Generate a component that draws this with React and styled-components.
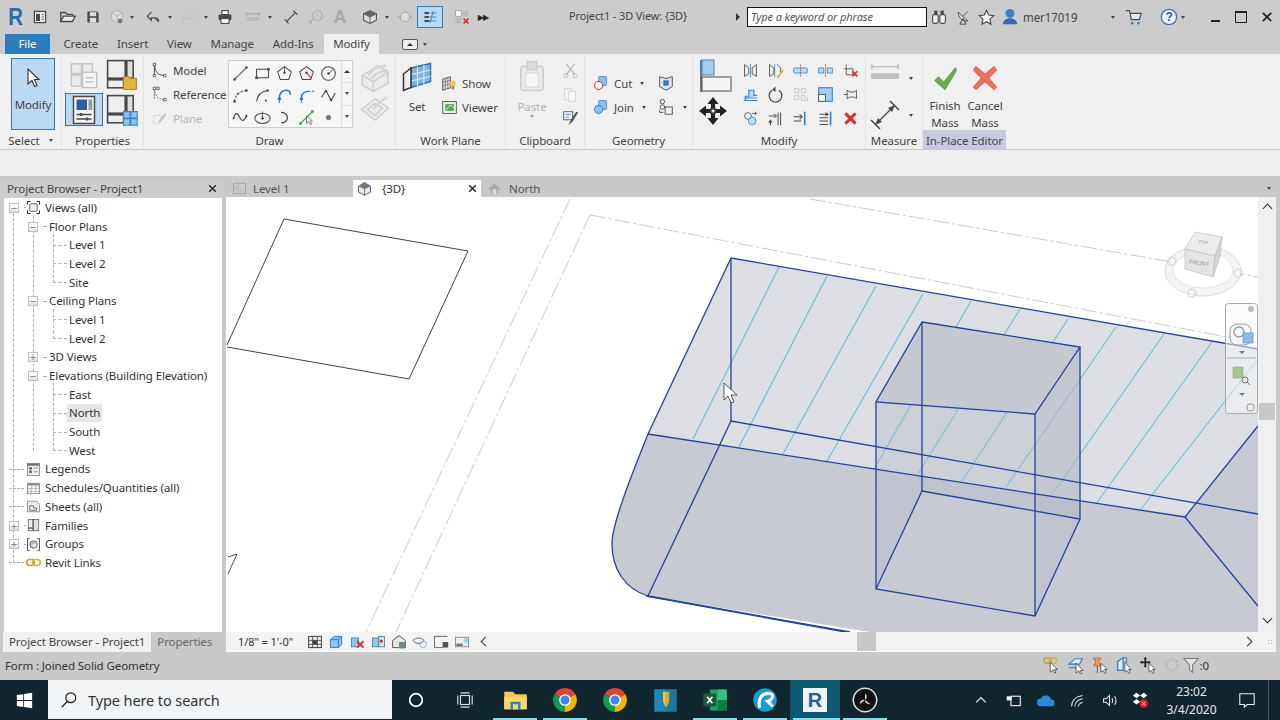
import React from 'react';
import styled, { createGlobalStyle } from 'styled-components';

const GlobalStyle = createGlobalStyle`
  html, body { margin: 0; padding: 0; background: #c9c9c9; }
  body { font-family: "Noto Sans", "Open Sans", sans-serif; font-size: 11.5px; letter-spacing: -0.1px; color: #333; }
`;

const B = '#3a86c8';
const D = '#4a4a4a';
const L = '#c4c4c4';
const Y = '#e3b341';
const R = '#d8312a';
const N = 'none';

// every icon is drawn on a 20x20 grid
const icons = {
  props: <><rect x="3" y="3" width="14" height="14" fill="#eee" stroke={D} strokeWidth="1.6" /><rect x="5" y="6" width="5" height="9" fill={D} /><path d="M12 7h3M12 10h3M12 13h3" stroke={D} /></>,
  open: <><path d="M2 15V5h5l2 2h6v2" fill={N} stroke={D} strokeWidth="1.5" /><path d="M2 15l3-6h13l-3 6z" fill="#eee" stroke={D} strokeWidth="1.5" /></>,
  save: <><path d="M3 3h12l2 2v12H3z" fill={D} /><rect x="6" y="4" width="8" height="5" fill="#ddd" /><rect x="6" y="11" width="8" height="6" fill="#ddd" /></>,
  sync: <><path d="M10 2l7 3v8l-7 5-7-5V5z" fill="#ddd" stroke="#aaa" /><path d="M3 5l7 3 7-3M10 8v10" stroke="#aaa" fill={N} /><circle cx="14" cy="15" r="3" fill="#777" /></>,
  undo: <path d="M8 4L3 9l5 5V11h5c3 0 4 2 4 5-1-2-2-3-4-3" fill={N} stroke={D} strokeWidth="1.5" />,
  redo: <path d="M12 4l5 5-5 5V11H7c-3 0-4 2-4 5 1-2 2-3 4-3" fill={N} stroke={L} strokeWidth="1.5" />,
  print: <><rect x="6" y="2" width="8" height="5" fill="#fff" stroke={D} strokeWidth="1.4" /><rect x="2" y="7" width="16" height="7" rx="1.5" fill={D} /><rect x="5" y="12" width="10" height="6" fill="#fff" stroke={D} strokeWidth="1.4" /></>,
  measure: <><path d="M2 6h16M2 4v4M18 4v4" stroke="#999" fill={N} /><rect x="2" y="10" width="16" height="5" fill="#bbb" /></>,
  dim: <><path d="M4 16L16 4" stroke={D} strokeWidth="1.5" /><path d="M2 13l5 5M13 2l5 5" stroke={D} strokeWidth="1.5" /></>,
  tag: <><circle cx="12" cy="8" r="6" fill={N} stroke="#aaa" strokeWidth="1.3" /><path d="M7 12l-4 4" stroke="#aaa" strokeWidth="1.3" /><circle cx="3" cy="17" r="1.5" fill="#aaa" /><path d="M12 5v6" stroke="#aaa" /></>,
  house: <><path d="M10 2l8 4v8l-8 4-8-4V6z" fill="#ddd" stroke={D} strokeWidth="1.3" /><path d="M2 6l8 4 8-4M10 10v8" fill={N} stroke={D} /><path d="M2 6l8-4 8 4-8 4z" fill="#666" /></>,
  diamond: <><circle cx="10" cy="10" r="6" fill="#ddd" stroke="#999" /><path d="M1 10h3M16 10h3" stroke="#999" /></>,
  thin: <><path d="M3 5h6M3 10h6M3 15h6" stroke="#222" strokeWidth="2" /><path d="M11 5h7M10 10h8M9 15h9M14 3l-4 14" stroke={B} strokeWidth="1.3" /></>,
  hidden: <><rect x="2" y="2" width="7" height="7" fill="#fff" stroke="#999" /><rect x="11" y="2" width="7" height="7" fill="#bbb" /><rect x="2" y="11" width="7" height="7" fill="#bbb" /><path d="M12 12l6 6M18 12l-6 6" stroke={R} strokeWidth="2" /></>,
  cursor: <path d="M5 1v15l4-3.5 2.5 6 2.5-1-2.5-6H16z" fill="#fff" stroke="#333" strokeWidth="1.1" />,
  typeProps: <><rect x="1" y="2" width="7" height="7" fill="#ececec" stroke={L} /><rect x="9" y="2" width="7" height="7" fill="#ececec" stroke={L} /><rect x="1" y="10" width="7" height="8" fill="#ececec" stroke={L} /><rect x="9" y="8" width="10" height="11" fill="#f5f5f5" stroke={L} /><path d="M11 12h6M11 15h6" stroke={L} /></>,
  folder: <><rect x="1" y="1" width="11" height="11" fill="#eee" stroke={D} /><rect x="13" y="1" width="4" height="11" fill="#ddd" stroke={D} /><rect x="1" y="13" width="10" height="5" fill="#eee" stroke={D} /><path d="M11 11h3l1 1h4v7h-8z" fill={Y} stroke="#a97f20" strokeWidth=".6" /></>,
  propsBig: <><rect x="3" y="1" width="14" height="18" fill="#f6f6f6" stroke={D} /><rect x="5" y="3" width="7" height="7" fill="#2f5f9f" /><rect x="13" y="3" width="2.5" height="7" fill="#999" /><path d="M5 13h10M5 16h10" stroke={D} /><path d="M8 12v2M12 15v2" stroke={D} strokeWidth="1.5" /></>,
  gridBlue: <><rect x="1" y="1" width="11" height="11" fill="#eee" stroke={D} /><rect x="13" y="1" width="4" height="11" fill="#ddd" stroke={D} /><rect x="1" y="13" width="10" height="5" fill="#eee" stroke={D} /><path d="M11 11h4v4h-4zM15.5 11h4v4h-4zM11 15.5h4v4h-4zM15.5 15.5h4v4h-4z" fill="#8fc4ee" stroke={B} strokeWidth=".7" /></>,
  model: <><path d="M3 2v15M3 3c1 10 4 13 12 14" fill={N} stroke={D} strokeWidth="1.2" /><path d="M1.5 1.5h3v3h-3zM1.5 15.5h3v3h-3zM14.5 15.5h3v3h-3z" fill="#fff" stroke={D} /></>,
  refPlane: <><path d="M3 3v14M3 4c1 9 4 12 12 13" fill={N} stroke={D} strokeDasharray="2 1.5" /><path d="M1.5 1.5h3v3h-3zM6 1.5h3v3H6zM14.5 15.5h3v3h-3z" fill="#fff" stroke={D} /></>,
  plane: <><path d="M2 7h10l-3 10H2z" fill={N} stroke={L} strokeDasharray="2 1" /><path d="M8 14l8-10 2 2-8 10z" fill={L} /></>,
  line: <><path d="M3 17L17 3" stroke={D} strokeWidth="1.2" /><circle cx="3" cy="17" r="1.5" fill={D} /><circle cx="17" cy="3" r="1.5" fill={D} /></>,
  rect: <><rect x="3" y="5" width="14" height="10" fill={N} stroke={D} strokeWidth="1.2" /><rect x="15.5" y="3.5" width="3" height="3" fill={D} /><rect x="1.5" y="13.5" width="3" height="3" fill={D} /></>,
  pent: <><path d="M10 2l8 6-3 9H5L2 8z" fill={N} stroke={D} strokeWidth="1.2" /><circle cx="10" cy="9" r="1.5" fill={D} /><path d="M10 2v7" stroke={D} /></>,
  pentR: <><path d="M10 2l8 6-3 9H5L2 8z" fill={N} stroke={D} strokeWidth="1.2" /><circle cx="10" cy="9" r="1.5" fill={D} /><path d="M10 9l6 7" stroke={R} strokeWidth="1.2" /></>,
  circ: <><circle cx="10" cy="10" r="8" fill={N} stroke={D} strokeWidth="1.2" /><circle cx="10" cy="10" r="1.5" fill={D} /><path d="M10 10l6-5" stroke={D} /></>,
  arc3: <><path d="M3 17C4 9 9 5 17 4" fill={N} stroke={D} strokeWidth="1.2" strokeDasharray="3 1.5" /><circle cx="3" cy="17" r="1.5" fill={D} /><circle cx="17" cy="4" r="1.5" fill={D} /><circle cx="7" cy="8" r="1.2" fill={D} /></>,
  arc2: <><path d="M3 17C4 9 9 5 16 4" fill={N} stroke={D} strokeWidth="1.2" /><circle cx="16" cy="4" r="1.5" fill={D} /><circle cx="14" cy="16" r="1.2" fill={D} /></>,
  arcB: <><path d="M4 13C4 6 9 3 14 4c2 1 3 3 3 5" fill={N} stroke="#2c79c2" strokeWidth="1.8" /><circle cx="4" cy="14" r="2" fill="#2c79c2" /><path d="M4 16v3" stroke={D} /></>,
  arcB2: <><path d="M4 13C4 7 8 5 14 5" fill={N} stroke="#2c79c2" strokeWidth="1.8" /><circle cx="4" cy="14" r="2" fill="#2c79c2" /><path d="M4 16v3M16 5h3" stroke={D} /></>,
  spline: <><path d="M2 12L7 4l6 12 5-9" fill={N} stroke={D} strokeWidth="1.2" /><circle cx="7" cy="5" r="1.5" fill={D} /><circle cx="13" cy="15" r="1.5" fill={D} /></>,
  wave: <><path d="M2 10c3-8 5-4 7 0s5 6 8-2" fill={N} stroke={D} strokeWidth="1.5" /><circle cx="2" cy="11" r="1.3" fill={D} /><circle cx="17" cy="8" r="1.3" fill={D} /></>,
  ellipse: <><ellipse cx="10" cy="11" rx="9" ry="6" fill={N} stroke={D} strokeWidth="1.2" /><circle cx="10" cy="11" r="1.5" fill={D} /><path d="M10 3v8" stroke={D} /></>,
  partial: <path d="M6 4c8 0 10 9 3 12H6" fill={N} stroke={D} strokeWidth="1.5" />,
  pick: <><path d="M3 17L17 3" stroke="#4ca64c" strokeWidth="1.5" /><circle cx="3" cy="17" r="1.7" fill="#4ca64c" /><circle cx="17" cy="3" r="1.7" fill="#4ca64c" /><path d="M10 8v9l2.5-2 2 3.5 1.5-1-2-3.5h3z" fill="#fff" stroke="#333" strokeWidth=".7" /></>,
  dot: <circle cx="10" cy="10" r="3" fill="#777" />,
  faded1: <><path d="M2 9l10-6 6 4v7l-9 5-7-4z" fill="#ebebeb" stroke="#cfcfcf" /><path d="M2 9l7 4 9-6M9 13v6" fill={N} stroke="#cfcfcf" /><path d="M6 9c2-4 6-6 11-6M8 11c2-3 6-5 10-5" stroke="#d5d5d5" strokeWidth="1.5" fill={N} /></>,
  faded2: <><path d="M1 11l9-7 9 6-9 8z" fill="#ececec" stroke="#cfcfcf" /><path d="M5 11l5-4 5 3-5 5z" fill={N} stroke="#cfcfcf" /><path d="M9 11c2-4 5-6 9-8" stroke="#d5d5d5" strokeWidth="1.5" fill={N} /></>,
  setGrid: <><path d="M6 4l13-3v12L6 17z" fill="#7fb4e0" stroke="#2f6ea9" /><path d="M10.3 3v13M14.6 2v13M6 8.3l13-3M6 12.6l13-3" stroke="#dcecf9" strokeWidth=".7" /><path d="M1 8l5-4v13l-5 2z" fill="#f0f0f0" stroke="#333" /></>,
  show: <><path d="M2 5l9-3v13l-9 3z" fill="#ddd" stroke={D} /><path d="M5 4v13M8 3v13M2 9l9-3M2 13l9-3" stroke={D} strokeWidth=".6" /><circle cx="14" cy="10" r="3.5" fill="#f2c94c" /><rect x="12.5" y="13" width="3" height="4" fill="#888" /></>,
  viewer: <><rect x="2" y="3" width="16" height="14" fill="#eee" stroke={D} /><rect x="5" y="6" width="10" height="8" fill="#57a55a" /><path d="M6 13l5-6 3 3" stroke="#fff" fill={N} /></>,
  paste: <><rect x="3" y="4" width="14" height="15" rx="2" fill="#ebebeb" stroke="#cfcfcf" /><rect x="7" y="1" width="6" height="5" fill="#dcdcdc" stroke="#cfcfcf" /><rect x="6" y="8" width="8" height="9" fill="#f7f7f7" stroke="#ddd" /></>,
  scissors: <><path d="M5 2l10 13M15 2L5 15" stroke="#bbb" strokeWidth="1.5" /><circle cx="4.5" cy="16" r="2.5" fill={N} stroke="#bbb" /><circle cx="15.5" cy="16" r="2.5" fill={N} stroke="#bbb" /></>,
  copy: <><path d="M3 3h8v13H3z" fill="#f4f4f4" stroke="#ccc" /><path d="M8 6h8v12H8z" fill="#f7f7f7" stroke="#ccc" /></>,
  brush: <><rect x="3" y="3" width="10" height="9" fill="#f4f4f4" stroke="#555" /><path d="M5 6h6M5 9h4" stroke={B} /><path d="M8 18l3-6 6-9 2 1-6 10z" fill="#555" /></>,
  cut: <><rect x="7" y="2" width="10" height="11" rx="1" fill="#8fc0ea" stroke={B} /><circle cx="7" cy="13" r="5" fill="#fff" stroke={R} strokeWidth="1.3" /></>,
  join: <><rect x="7" y="2" width="10" height="11" rx="1" fill="#8fc0ea" stroke={B} /><circle cx="7" cy="13" r="5" fill="#8fc0ea" stroke={B} strokeWidth="1.3" /></>,
  cutWall: <><path d="M3 3l7 2 7-2v11l-7 4-7-4z" fill="#e4e4e4" stroke={D} /><rect x="7" y="7" width="6" height="6" fill="#2f7ec4" /></>,
  wallJoin: <><circle cx="6" cy="4" r="2.5" fill={N} stroke={D} /><circle cx="6" cy="10" r="2.5" fill={N} stroke={D} /><rect x="9" y="10" width="8" height="8" fill={N} stroke={D} /><path d="M3 13v3h4" fill={N} stroke={D} /></>,
  alignBig: <><path d="M2 1v32" stroke={D} strokeWidth="1.5" /><rect x="3" y="1" width="12" height="15" fill="#a4cdec" stroke={B} /><rect x="3" y="18" width="29" height="14" fill="#f4f4f4" stroke={D} /></>,
  move: <><path d="M10 0l4 5h-2.5v3h-3V5H6zM10 20l4-5h-2.5v-3h-3v3H6zM0 10l5-4v2.5h3v3H5V14zM20 10l-5-4v2.5h-3v3h3V14z" fill="#222" /><rect x="8.5" y="8.5" width="3" height="3" fill="#fff" stroke="#222" /></>,
  mirror: <><path d="M3 3l5 4v7l-5 3zM17 3l-5 4v7l5 3z" fill="#eee" stroke={D} /><path d="M10 2v16" stroke={B} /></>,
  mirrorPen: <><path d="M3 3l5 4v7l-5 3zM12 3l4 4v7" fill="#eee" stroke={D} /><path d="M9 2v16" stroke={B} /><path d="M11 18l7-9 2 1-7 9z" fill={Y} /></>,
  splitB: <><rect x="2" y="7" width="16" height="6" rx="1" fill="#bcdcf4" stroke={B} /><path d="M10 3v14" stroke={R} strokeDasharray="2 1" /></>,
  splitC: <><rect x="2" y="7" width="6" height="6" fill="#bcdcf4" stroke={B} /><rect x="12" y="7" width="6" height="6" fill="#bcdcf4" stroke={B} /><path d="M10 3v14" stroke={R} strokeDasharray="2 1" /></>,
  unpinX: <><path d="M5 3v5H2M5 8h8v7H5z" fill={N} stroke={D} /><path d="M12 11l6 6M18 11l-6 6" stroke={R} strokeWidth="2" /></>,
  offset: <><path d="M2 17h16M4 17v-5h4V5h6v6h4" fill="#bcdcf4" stroke={B} strokeWidth="1.3" /><path d="M2 14h16" stroke={B} /></>,
  rotate: <><path d="M14 5a7.5 7.5 0 1 1-8 0" fill={N} stroke={D} strokeWidth="1.5" /><path d="M10 1v6l-4-3z" fill={D} /></>,
  arrayG: <path d="M3 3h5v5H3zM11 3h5v5h-5zM3 11h5v5H3zM11 11h4v3h3v3h-7z" fill={N} stroke="#c4c4c4" />,
  scale: <><rect x="2" y="2" width="16" height="16" fill="#a4cdec" stroke={B} strokeWidth="1.3" /><rect x="2" y="10" width="8" height="8" fill="#fff" stroke={D} /></>,
  pin: <path d="M2 10h4M6 5l3 2h6l2-2v10l-2-2H9l-3 2z" fill={N} stroke={D} />,
  copyM: <><circle cx="7" cy="7" r="4" fill={N} stroke={D} /><circle cx="12" cy="13" r="4.5" fill="#bcdcf4" stroke={B} /><path d="M12 4h5l-2-2M17 4l-2 2" fill={N} stroke={D} /></>,
  trim: <path d="M2 7h6M8 5l3 2-3 2M4 12v6M2 15l2-3 2 3M13 3v15M13 18v-4M16 3v15" fill={N} stroke={D} strokeWidth="1.2" />,
  trimOne: <><path d="M2 8h10M9 5l3 3-3 3M2 13h9" fill={N} stroke={D} strokeWidth="1.2" /><path d="M15 2v16" stroke={B} strokeWidth="2" /></>,
  trimMany: <><path d="M3 5h10M3 9h10M3 13h10M3 17h10M10 3l3 2-3 2" fill={N} stroke={D} strokeWidth="1.2" /><path d="M16 2v16" stroke={B} strokeWidth="2" /></>,
  del: <path d="M4 4l12 12M16 4L4 16" stroke={R} strokeWidth="3.5" />,
  measureBig: <><path d="M2 4h28M2 1v6M30 1v6" stroke="#aaa" fill={N} /><rect x="1" y="11" width="30" height="6" rx="1" fill="#c0c0c0" /></>,
  dimBig: <><path d="M5 25L25 5" stroke={D} strokeWidth="1.2" /><path d="M1 20l9 9M20 1l9 9" stroke={D} strokeWidth="1.5" /><path d="M5 25l3-7 4 4zM25 5l-3 7-4-4z" fill={D} /></>,
  check: <path d="M2 12l3-3 4 4 9-11 1 2-9 15z" fill="#6bab4d" stroke="#4e8a35" strokeWidth=".5" />,
  cancel: <path d="M3 1l7 6 7-6 2 3-6 6 6 7-2 2-7-6-7 6-2-2 6-7-6-6z" fill="#ef6e5e" stroke="#cf4a3a" strokeWidth=".5" />,
  binoc: <><rect x="2" y="7" width="7" height="11" rx="2" fill="#eee" stroke={D} strokeWidth="1.4" /><rect x="11" y="7" width="7" height="11" rx="2" fill="#eee" stroke={D} strokeWidth="1.4" /><rect x="4" y="2" width="4" height="5" fill={D} /><rect x="12" y="2" width="4" height="5" fill={D} /></>,
  sat: <><path d="M4 4c0 7 5 11 12 11z" fill="#ddd" stroke={D} strokeWidth="1.2" /><path d="M10 12l-4 7h8zM10 9l6-6" stroke={D} fill={N} strokeWidth="1.2" /></>,
  star: <path d="M10 1.5l2.6 5.6 6 .7-4.5 4.1 1.2 6L10 15l-5.3 2.9 1.2-6L1.4 7.8l6-.7z" fill="#f4f4f4" stroke={D} strokeWidth="1.3" />,
  user: <><circle cx="10" cy="6" r="5" fill="#4a7cc4" /><path d="M10 11C5 12 2 14 2 18h16c0-4-3-6-8-7z" fill="#3d69b0" /></>,
  cart: <><path d="M1 3h4l2 10h9l2-7H6" fill="#dceaf7" stroke={D} strokeWidth="1.3" /><circle cx="8" cy="17" r="1.5" fill={B} /><circle cx="15" cy="17" r="1.5" fill={B} /></>,
  help: <circle cx="10" cy="10" r="8.5" fill="#eef2fb" stroke="#4a6fb5" strokeWidth="1.5" />,
  sheetTab: <><path d="M2 3h16v14H2z" fill={N} stroke="#999" /><path d="M8 3v6H2M8 13h6" fill={N} stroke="#999" strokeDasharray="2 1" /></>,
  house3d: <><path d="M10 2l8 5v8l-8 4-8-4V7z" fill="#e6e6e6" stroke="#555" strokeWidth="1.2" /><path d="M2 7l8-5 8 5-8 4z" fill="#777" /><path d="M10 11v8" stroke="#555" /></>,
  north: <><path d="M10 3l9 8h-4v6H5v-6H1z" fill="#aaa" /><rect x="7.5" y="11" width="5" height="6" fill="#ddd" /></>,
  viewsAll: <><path d="M2 6V2h4M14 2h4v4M18 14v4h-4M6 18H2v-4" fill={N} stroke="#222" strokeWidth="1.3" /><rect x="5" y="5" width="10" height="10" rx="1.5" fill="#eee" stroke="#666" strokeWidth="1.3" /></>,
  legends: <><rect x="2" y="2" width="16" height="16" fill="#eee" stroke="#777" /><rect x="2" y="2" width="16" height="3" fill="#777" /><rect x="4" y="7" width="4" height="3" fill="#666" /><path d="M10 8h6M10 13h6" stroke="#777" /><circle cx="6" cy="13" r="2" fill="#666" /></>,
  schedules: <><rect x="2" y="3" width="16" height="14" fill="#f4f4f4" stroke="#777" /><rect x="2" y="3" width="16" height="3" fill="#888" /><path d="M2 10h16M2 14h16M7 6v11M13 6v11" stroke="#999" strokeWidth=".7" /></>,
  sheets: <><path d="M2 3h12l4 4v10H2z" fill="#eee" stroke="#777" /><path d="M5 15V9h5v3h4v3z" fill={N} stroke="#555" /></>,
  families: <><rect x="3" y="2" width="6" height="11" fill="#eee" stroke="#555" /><rect x="10" y="2" width="7" height="15" fill="#e0e0e0" stroke="#555" /><rect x="3" y="14" width="6" height="3" fill="#eee" stroke="#555" /></>,
  groups: <><path d="M5 2H2v16h3M15 2h3v16h-3" fill={N} stroke="#222" /><circle cx="10" cy="10" r="5" fill="#bbb" stroke="#555" /><circle cx="11" cy="11" r="2.5" fill="#eee" /></>,
  links: <><rect x="1" y="6" width="10" height="8" rx="4" fill={N} stroke="#c79a2a" strokeWidth="2.2" /><rect x="9" y="6" width="10" height="8" rx="4" fill={N} stroke="#d9b13d" strokeWidth="2.2" /></>,
  vbDetail: <><rect x="2" y="3" width="16" height="14" fill="#eee" stroke="#444" strokeWidth="1.3" /><path d="M2 8h16M2 13h16M7 3v14M13 3v14" stroke="#444" /><rect x="7" y="8" width="6" height="5" fill="#444" /></>,
  vbStyle: <><path d="M3 7l5-4h9v10l-4 4H3z" fill="#8fc4ee" stroke="#2f7ab9" strokeWidth="1.2" /><path d="M3 7h10v10M13 7l4-4" fill={N} stroke="#2f7ab9" strokeWidth="1.2" /></>,
  vbSun: <><rect x="3" y="5" width="9" height="11" fill="#9cc4e6" stroke="#2f7ab9" /><path d="M10 9l8 8M18 9l-8 8" stroke={R} strokeWidth="2.4" /></>,
  vbShadow: <><rect x="3" y="5" width="8" height="11" fill="#9cc4e6" stroke="#2f7ab9" /><rect x="11" y="3" width="7" height="13" fill="#dce9f5" stroke="#2f7ab9" /><circle cx="14" cy="9" r="2" fill={R} /></>,
  vbCrop: <><path d="M10 2l8 6v9H2V8z" fill="#e6e6e6" stroke="#555" strokeWidth="1.2" /><rect x="10" y="10" width="8" height="8" fill="#6d8e78" /></>,
  vbHide: <><path d="M1 8c4-4 10-4 14 0-4 5-10 5-14 0z" fill="#f7f7f7" stroke="#444" /><circle cx="14" cy="13" r="4" fill={N} stroke="#6aa3c9" /></>,
  vbLock: <><path d="M2 3v14M18 3H2M2 17h10" stroke="#444" fill={N} /><rect x="12" y="10" width="7" height="7" fill="#555" /></>,
  vbTemp: <><rect x="2" y="4" width="16" height="12" fill="#eee" stroke="#777" /><rect x="3" y="12" width="8" height="3" fill="#777" /><circle cx="15" cy="8" r="3" fill="#9fd0f0" /></>,
  stLink: <><rect x="1" y="2" width="8" height="6" rx="3" fill={N} stroke="#cda22c" strokeWidth="1.6" /><rect x="7" y="2" width="8" height="6" rx="3" fill={N} stroke="#d9b13d" strokeWidth="1.6" /><path d="M8 7v11l3-2.5 2 3.5 1.5-1-2-3h3.5z" fill="#fff" stroke="#333" strokeWidth=".8" /></>,
  stUnder: <><path d="M2 9l7-6h8l-3 6z" fill="#dcebf8" stroke="#2f7ab9" strokeWidth="1.2" /><path d="M2 13h11" stroke="#2f7ab9" strokeWidth="1.2" /><path d="M10 8v11l3-2.5 2 3.5 1.5-1-2-3h3.5z" fill="#fff" stroke="#333" strokeWidth=".8" /></>,
  stPin: <><path d="M3 2h8v2H9v5h3v2H3V9h2V4H3z" fill="#ee9a5d" stroke="#b25b1c" strokeWidth=".7" /><path d="M7 11v8" stroke="#555" /><path d="M11 8v10l2.5-2 2 3.5 1.5-1-2-3.5h3z" fill="#fff" stroke="#333" strokeWidth=".8" /></>,
  stFace: <><path d="M3 6l6-4v14H3z" fill="#dcebf8" stroke="#2f7ab9" strokeWidth="1.3" /><path d="M9 2h4v6" fill={N} stroke="#2f7ab9" /><path d="M11 7v11l2.5-2 2 3.5 1.5-1-2-3.5h3z" fill="#fff" stroke="#333" strokeWidth=".8" /></>,
  stDrag: <><path d="M7 1l2 2H8v3h3V5l2 2-2 2V8H8v3h1l-2 2-2-2h1V8H3v1L1 7l2-2v1h3V3H5z" fill="#222" /><path d="M11 8v10l2.5-2 2 3.5 1.5-1-2-3.5h3z" fill="#fff" stroke="#333" strokeWidth=".8" /></>,
  stCog: <circle cx="10" cy="10" r="6" fill={N} stroke="#bbb" strokeWidth="3" strokeDasharray="3 1.5" />,
  stFilter: <path d="M1 2h18l-7 8v9l-4-3v-6z" fill="#e4e4e4" stroke="#777" strokeWidth="1.3" />,
  win: <path d="M1 3.5l7.5-1v7H1zM9.5 2.3L19 1v8.5H9.5zM1 10.5h7.5v7l-7.5-1zM9.5 10.5H19V19l-9.5-1.3z" fill="#fff" />,
  lens: <><circle cx="12" cy="7.5" r="5.5" fill={N} stroke="#222" strokeWidth="1.3" /><path d="M8 11.5L2 18" stroke="#222" strokeWidth="1.5" /></>,
  cortana: <circle cx="10" cy="10" r="7" fill={N} stroke="#fff" strokeWidth="2" />,
  taskview: <><rect x="5" y="5" width="10" height="10" fill={N} stroke="#ddd" strokeWidth="1.3" /><path d="M2 5v10M18 5v10M5 2h10M5 18h10" stroke="#ddd" strokeWidth="1.3" /></>,
  explorer: <><path d="M1 3h7l2 2h9v12H1z" fill="#f2c453" /><rect x="1" y="7" width="18" height="10" fill="#fbd66c" /><rect x="6" y="11" width="8" height="6" fill="#2b84c6" /><rect x="8" y="13" width="4" height="4" fill="#fbd66c" /></>,
  chrome: <><path d="M10 10L2 5.5a9.2 9.2 0 0 1 16 0z" fill="#db4437" /><path d="M10 10L2 5.5A9.2 9.2 0 0 0 10 19.2z" fill="#0f9d58" /><path d="M10 10l8-4.5A9.2 9.2 0 0 1 10 19.2z" fill="#f4b400" /><circle cx="10" cy="10" r="4.5" fill="#fff" /><circle cx="10" cy="10" r="3.5" fill="#4285f4" /></>,
  marker: <><rect x="1" y="1" width="18" height="18" fill="#1e88b4" /><path d="M8 3h5v8l-2.5 5L8 11z" fill="#f3c13a" /><rect x="10" y="1" width="9" height="18" fill="#000" opacity=".12" /></>,
  excel: <><rect x="6" y="2" width="13" height="16" rx="1" fill="#21a366" /><rect x="12" y="2" width="7" height="8" fill="#33c481" /><rect x="12" y="10" width="7" height="8" fill="#107c41" /><rect x="1" y="5" width="10" height="10" rx="1" fill="#185c37" /><path d="M4 7.5l4 5M8 7.5l-4 5" stroke="#fff" strokeWidth="1.2" /></>,
  rufus: <><circle cx="10" cy="10" r="9" fill="#1b9ad6" /><path d="M6 16c-2-7 2-12 8-11 3 1 2 5-2 6l4 4" fill={N} stroke="#fff" strokeWidth="2.4" /></>,
  obs: <><circle cx="10" cy="10" r="9" fill="#111" stroke="#ddd" strokeWidth="1.2" /><path d="M10 5a3 3 0 0 1 0 5zM6 13a3 3 0 0 1 4-3zM14 13a3 3 0 0 1-4-3z" fill="#ddd" /></>,
  up: <path d="M4 13l6-6 6 6" fill={N} stroke="#eee" strokeWidth="1.5" />,
  action: <><rect x="7" y="5" width="11" height="11" fill={N} stroke="#eee" strokeWidth="1.3" /><path d="M2 5h6v5H2z" fill="#eee" /></>,
  cloud: <path d="M5 16a4 4 0 0 1 0-8 6 6 0 0 1 11 1 3.5 3.5 0 0 1 0 7z" fill="#2b88d8" />,
  wifi: <path d="M3 17c0-7 5-12 13-13M7 17c0-4 3-8 9-9M11 17c0-2 2-4 5-5" fill={N} stroke="#ddd" strokeWidth="1.2" />,
  speaker: <><path d="M3 8h3l4-4v12l-4-4H3z" fill={N} stroke="#eee" strokeWidth="1.2" /><path d="M13 7c1 2 1 4 0 6M16 5c2 3 2 7 0 10" fill={N} stroke="#eee" strokeWidth="1.2" /></>,
  dropbox: <><path d="M5 2l4 3-4 3-4-3zM13 2l4 3-4 3-4-3zM5 9l4 3-4 3-4-3z" fill="#fff" /><circle cx="13" cy="14" r="5" fill="#e81123" /><path d="M11 12l4 4M15 12l-4 4" stroke="#fff" /></>,
  notify: <path d="M2 3h16v12h-8l-3 3v-3H2z" fill={N} stroke="#eee" strokeWidth="1.2" />,
  closeX: <path d="M4 4l12 12M16 4L4 16" stroke="#222" strokeWidth="2.6" />,
};

const Glyph = styled.svg`
  display: block;
  flex: none;
  overflow: visible;
`;

const Icon = ({ name, size = 16, box = 20 }) => (
  <Glyph width={size} height={size} viewBox={`0 0 ${box} ${box}`}>{icons[name]}</Glyph>
);

const Page = styled.div`
  width: 1280px;
  height: 720px;
  display: flex;
  flex-direction: column;
  overflow: hidden;
  background: #c9c9c9;
`;

/* title bar */
const TitleBar = styled.div`
  height: 34px;
  display: flex;
  align-items: center;
  background: #cccccc;
`;

const QatItem = styled.div`
  flex: none;
  width: ${(p) => p.$w || 20}px;
  height: 20px;
  margin-left: ${(p) => p.$ml || 0}px;
  display: flex;
  align-items: center;
  justify-content: center;
  ${(p) => p.$active && 'background: #bcd9f3; outline: 1px solid #2f7ab9;'}
`;

const Logo = styled.span`
  font: bold 24px "Liberation Sans", sans-serif;
  color: #2a6ca8;
  transform: scaleX(.85);
`;

const LetterA = styled.span`
  font: bold 18px "Liberation Sans", sans-serif;
  color: #a9a9a9;
`;

const Caret = styled.i`
  display: block;
  flex: none;
  width: 0;
  height: 0;
  margin-left: ${(p) => p.$ml || 0}px;
  border-left: 2.5px solid transparent;
  border-right: 2.5px solid transparent;
  border-top: 3px solid ${(p) => p.$c || '#444'};
`;

const FastForward = styled.span`
  font: 8px "DejaVu Sans", sans-serif;
  letter-spacing: -1px;
  color: #222;
`;

const WindowTitle = styled.div`
  flex: none;
  width: 140px;
  margin-left: 69px;
  margin-top: -4px;
  text-align: center;
  white-space: nowrap;
  font-size: 11.5px;
  color: #444;
  transform: scaleX(.95);
`;

const ExpandArrow = styled.i`
  flex: none;
  width: 0;
  height: 0;
  margin-left: 38px;
  border-top: 4px solid transparent;
  border-bottom: 4px solid transparent;
  border-left: 4px solid #333;
`;

const SearchBox = styled.div`
  flex: none;
  box-sizing: border-box;
  width: 180px;
  height: 20px;
  margin-left: 7px;
  padding-left: 3px;
  background: #fff;
  border: 1px solid #111;
  font: italic 11px/18px "Noto Sans", sans-serif;
  color: #555;
  white-space: nowrap;
  overflow: hidden;
`;

const UserName = styled.span`
  flex: none;
  width: 88px;
  margin-left: 3px;
  font-size: 12px;
  letter-spacing: 0;
  color: #444;
  transform-origin: left;
  transform: scaleX(.95);
`;

const HelpMark = styled.span`
  font: bold 12px "Liberation Sans", sans-serif;
  color: #33559c;
  margin-top: -1px;
`;

const HelpWrap = styled.div`
  flex: none;
  width: 20px;
  height: 20px;
  margin-left: ${(p) => p.$ml}px;
  display: grid;
  place-items: center;
  & > * { grid-area: 1 / 1; }
`;

const WindowButtons = styled.div`
  display: flex;
  margin-left: 17px;
`;

const WinButton = styled.div`
  flex: none;
  width: 26px;
  height: 20px;
  display: flex;
  align-items: center;
  justify-content: center;
`;

const MinBar = styled.i`
  width: 9px;
  height: 2px;
  margin-top: 8px;
  background: #222;
`;

const MaxBox = styled.i`
  box-sizing: border-box;
  width: 12px;
  height: 12px;
  border: 1.5px solid #222;
  border-top-width: 2.5px;
`;

/* ribbon tabs */
const TabRow = styled.div`
  height: 20px;
  display: flex;
  align-items: stretch;
  padding-left: 5px;
  background: #cccccc;
`;

const FileTab = styled.div`
  width: 45px;
  margin-right: 4px;
  background: #2b7cb8;
  color: #fff;
  text-align: center;
  line-height: 20px;
`;

const RibbonTab = styled.div`
  padding: 0 ${(p) => (p.$active ? 9 : 9.4)}px;
  margin: 0 ${(p) => (p.$active ? 1 : 0)}px;
  line-height: 20px;
  color: #444;
  background: ${(p) => (p.$active ? '#f0f0f0' : 'transparent')};
`;

const MinimizeToggle = styled.div`
  display: flex;
  align-items: center;
  margin-left: 22px;
  gap: 5px;
`;

const TogglePill = styled.div`
  width: 14px;
  height: 9px;
  border: 1px solid #555;
  border-radius: 2px;
  background: #eee;
  display: grid;
  place-items: center;
`;

const UpCaret = styled.i`
  width: 0;
  height: 0;
  border-left: 3px solid transparent;
  border-right: 3px solid transparent;
  border-bottom: 3px solid #333;
`;

/* ribbon */
const Ribbon = styled.div`
  height: 96px;
  display: flex;
  background: #f0f0f0;
  border-bottom: 1px solid #c9c9c9;
  box-sizing: border-box;
`;

const Panel = styled.section`
  flex: none;
  width: ${(p) => p.$w}px;
  box-sizing: border-box;
  display: flex;
  flex-direction: column;
  border-right: ${(p) => (p.$plain ? 'none' : '1px solid #e2e2e2')};
`;

const PanelBody = styled.div`
  flex: 1;
  display: flex;
  min-height: 0;
`;

const PanelLabel = styled.div`
  height: 19px;
  box-sizing: border-box;
  padding-top: 2px;
  display: flex;
  align-items: center;
  justify-content: center;
  gap: 9px;
  font-size: 11.5px;
  color: #444;
  white-space: nowrap;
  background: ${(p) => p.$bg || 'transparent'};
`;

const ModifyButton = styled.div`
  box-sizing: border-box;
  width: 44px;
  height: 72px;
  margin: 4px 0 0 11px;
  padding-top: 9px;
  background: #bcd9f3;
  border: 1px solid #2f7ab9;
  display: flex;
  flex-direction: column;
  align-items: center;
  font-size: 11.5px;
  color: #444;
  gap: 9px;
`;

const PropsGrid = styled.div`
  display: grid;
  grid-template-columns: 38px 38px;
  grid-auto-rows: 35px;
  padding: 3px 0 0 3px;
  place-items: center;
`;

const PropsActive = styled.div`
  width: 38px;
  height: 33px;
  display: grid;
  place-items: center;
  background: #bcd9f3;
  border: 1px solid #2f7ab9;
  box-sizing: border-box;
`;

const CommandStack = styled.div`
  flex: none;
  width: ${(p) => p.$w}px;
  padding: ${(p) => p.$top || 4}px 0 0 ${(p) => p.$left ?? 8}px;
  box-sizing: border-box;
  display: flex;
  flex-direction: column;
  align-items: ${(p) => (p.$center ? 'center' : 'flex-start')};
  gap: ${(p) => p.$gap || 0}px;
`;

const Command = styled.div`
  flex: none;
  height: 24px;
  display: flex;
  align-items: center;
  gap: ${(p) => p.$gap ?? 5}px;
  color: ${(p) => (p.$off ? '#b5b5b5' : '#444')};
  font-size: 11.5px;
  white-space: nowrap;
`;

const Gallery = styled.div`
  flex: none;
  box-sizing: border-box;
  width: 125px;
  height: 68px;
  margin-top: 6px;
  display: flex;
  background: #f6f6f6;
  border: 1px solid #cfcfcf;
`;

const GalleryGrid = styled.div`
  width: 112px;
  padding: 2px 0 0 1px;
  box-sizing: border-box;
  display: grid;
  grid-template-columns: repeat(5, 21.8px);
  grid-auto-rows: 21.8px;
  place-items: center;
`;

const GalleryScroll = styled.div`
  flex: 1;
  display: flex;
  flex-direction: column;
  border-left: 1px solid #ddd;
`;

const ScrollCell = styled.div`
  flex: 1;
  display: grid;
  place-items: center;
  border-bottom: 1px solid #ddd;
  &:last-child { border-bottom: none; }
`;

const BigButton = styled.div`
  flex: none;
  width: ${(p) => p.$w}px;
  display: flex;
  flex-direction: column;
  align-items: center;
  padding-top: ${(p) => p.$top ?? 8}px;
  box-sizing: border-box;
  color: ${(p) => (p.$off ? '#b5b5b5' : '#444')};
  font-size: 11.5px;
  line-height: 17px;
  text-align: center;
`;

const BigText = styled.div`
  margin-top: ${(p) => p.$mt ?? 7}px;
  white-space: nowrap;
`;

const Matrix = styled.div`
  display: grid;
  grid-template-columns: repeat(5, 25px);
  grid-auto-rows: 24px;
  padding-top: 4px;
  place-items: center;
`;

const GeoColumn = styled.div`
  flex: none;
  width: ${(p) => p.$w}px;
  padding: 17px 0 0 ${(p) => p.$left}px;
  box-sizing: border-box;
`;

const OptionsBar = styled.div`
  height: 26px;
  background: #eeeeee;
  margin-bottom: 4px;
`;

/* main area */
const Workspace = styled.div`
  height: 472px;
  display: flex;
`;

const Browser = styled.aside`
  flex: none;
  width: 224px;
  display: flex;
  flex-direction: column;
`;

const BrowserHead = styled.div`
  height: 18px;
  box-sizing: border-box;
  padding: 0 6px 1px 7px;
  display: flex;
  align-items: center;
  justify-content: space-between;
  color: #444;
  background: #cdcdcd;
`;

const TreeBox = styled.div`
  flex: 1;
  margin: 0 2px 0 4px;
  padding-top: .5px;
  background: #fff;
  position: relative;
  &::before {
    content: '';
    position: absolute;
    left: 9px;
    top: 15px;
    height: 350px;
    border-left: 1px dashed #b0b0b0;
  }
`;

const Branch = styled.div`
  position: relative;
  &::before {
    content: '';
    position: absolute;
    left: ${(p) => p.$x}px;
    top: -2px;
    bottom: 9px;
    border-left: 1px dashed #b0b0b0;
  }
`;

const Row = styled.div`
  height: 18.7px;
  display: flex;
  align-items: center;
  position: relative;
  padding-left: ${(p) => p.$x}px;
  color: #333;
  white-space: nowrap;
`;

const Toggle = styled.i`
  flex: none;
  box-sizing: border-box;
  width: 10px;
  height: 10px;
  margin-right: 5px;
  border: 1px solid #c0c0c0;
  background: linear-gradient(#fff 40%, #ddd);
  position: relative;
  z-index: 1;
  display: grid;
  place-items: center;
  font: normal 9px/8px "DejaVu Sans", sans-serif;
  color: #777;
`;

const Dash = styled.i`
  flex: none;
  width: ${(p) => p.$w}px;
  margin-right: ${(p) => p.$mr ?? 2}px;
  border-top: 1px dashed #b0b0b0;
`;

const RowIcon = styled.span`
  flex: none;
  margin-right: 4px;
`;

const RowLabel = styled.span`
  padding: 1px 2px;
  margin-left: -2px;
  background: ${(p) => (p.$on ? '#e6e6e6' : 'transparent')};
  line-height: 16px;
`;

const BrowserTabs = styled.div`
  height: 20px;
  display: flex;
  padding-left: 3px;
`;

const BrowserTab = styled.div`
  padding: 0 6px;
  line-height: 19px;
  color: ${(p) => (p.$on ? '#444' : '#666')};
  background: ${(p) => (p.$on ? '#f0f0f0' : '#c9c9c9')};
  white-space: nowrap;
`;

const ViewArea = styled.main`
  flex: 1;
  display: flex;
  flex-direction: column;
  min-width: 0;
  margin-left: 2px;
`;

const ViewTabs = styled.div`
  height: 18px;
  display: flex;
  align-items: stretch;
  background: #c9c9c9;
`;

const ViewTab = styled.div`
  flex: none;
  width: ${(p) => p.$w}px;
  box-sizing: border-box;
  padding: 0 4px 0 ${(p) => p.$pl || 6}px;
  display: flex;
  align-items: center;
  gap: ${(p) => p.$gap || 6}px;
  color: ${(p) => (p.$on ? '#333' : '#555')};
  background: ${(p) => (p.$on ? '#fff' : 'transparent')};
`;

const TabClose = styled.span`
  margin-left: auto;
  margin-right: -1px;
`;

const TabsMenu = styled.div`
  margin-left: auto;
  margin-right: 9px;
  align-self: center;
`;

const CanvasRow = styled.div`
  height: 435px;
  display: flex;
`;

const Viewport = styled.div`
  flex: none;
  width: 1032px;
  position: relative;
  background: #fff;
  overflow: hidden;
`;

const Scene = styled.svg`
  display: block;
`;

const VScroll = styled.div`
  flex: none;
  width: 18px;
  margin-right: 4px;
  box-sizing: border-box;
  padding: 5px 0;
  background: #f0f0f0;
  display: flex;
  flex-direction: column;
  align-items: center;
`;

const Chevron = styled.i`
  display: block;
  flex: none;
  width: 6px;
  height: 6px;
  margin: ${(p) => p.$m || 0};
  border-left: 1.5px solid #333;
  border-top: 1.5px solid #333;
  transform: rotate(${(p) => p.$r}deg);
`;

const VThumb = styled.div`
  width: 16px;
  height: 17px;
  margin: 191px 0 auto;
  background: #c8c8c8;
`;

const CubeOverlay = styled.svg`
  position: absolute;
  right: 14px;
  top: 30px;
`;

const NavOverlay = styled.svg`
  position: absolute;
  right: 0;
  top: 106px;
`;

const ViewBar = styled.div`
  height: 19px;
  display: flex;
  align-items: center;
  background: #f4f4f4;
  margin-right: 4px;
  border-bottom: 1px solid #fff;
`;

const ScaleText = styled.span`
  flex: none;
  width: 81px;
  padding-left: 12px;
  box-sizing: border-box;
  font-size: 11px;
  color: #333;
  white-space: nowrap;
`;

const ViewBarIcons = styled.div`
  display: flex;
  gap: 5px;
  align-items: center;
`;

const HThumb = styled.div`
  width: 19px;
  height: 19px;
  margin-left: 368px;
  background: #c8c8c8;
`;

const Grip = styled.div`
  margin-left: auto;
  margin-right: 3px;
  width: 6px;
  height: 6px;
  background-image: radial-gradient(#aaa 1px, transparent 1px);
  background-size: 3px 3px;
`;

/* status bar and taskbar */
const StatusBar = styled.div`
  height: 28px;
  box-sizing: border-box;
  padding: 0 71px 2px 5px;
  display: flex;
  align-items: center;
  background: #c9c9c9;
  color: #333;
`;

const StatusIcons = styled.div`
  margin-left: auto;
  display: flex;
  align-items: center;
  gap: 6px;
`;

const FilterCount = styled.div`
  display: flex;
  align-items: center;
  gap: 1px;
  margin-left: -4px;
`;

const Taskbar = styled.div`
  height: 40px;
  display: flex;
  background: #10262e;
`;

const StartButton = styled.div`
  flex: none;
  width: 48px;
  display: grid;
  place-items: center;
`;

const SearchField = styled.div`
  flex: none;
  width: 344px;
  height: 39px;
  box-sizing: border-box;
  padding-left: 12px;
  display: flex;
  align-items: center;
  gap: 10px;
  background: #f2f3f5;
  font-size: 14.5px;
  color: #333;
`;

const TaskButton = styled.div`
  flex: none;
  width: ${(p) => p.$w || 50}px;
  position: relative;
  display: grid;
  place-items: center;
  background: ${(p) => (p.$active ? '#0d5a70' : 'transparent')};
  ${(p) => p.$open && `
    &::after {
      content: '';
      position: absolute;
      left: 3px;
      right: ${p.$active ? 0 : 3}px;
      bottom: 0;
      height: 2px;
      background: #80deef;
    }
  `}
`;

const RevitTile = styled.div`
  width: 24px;
  height: 24px;
  display: grid;
  place-items: center;
  background: #eef3f8;
  font: bold 20px "Liberation Sans", sans-serif;
  color: #2a5d9c;
`;

const Tray = styled.div`
  margin-left: auto;
  display: flex;
`;

const TrayItem = styled.div`
  flex: none;
  width: 32px;
  display: grid;
  place-items: center;
`;

const Clock = styled.div`
  flex: none;
  width: 69px;
  display: flex;
  flex-direction: column;
  align-items: center;
  justify-content: center;
  gap: 3px;
  color: #e8e8e8;
  font-size: 12px;
  letter-spacing: 0;
  line-height: 15px;
`;

const NotifyButton = styled.div`
  flex: none;
  width: 42px;
  display: grid;
  place-items: center;
`;

const ShowDesktop = styled.div`
  flex: none;
  width: 12px;
  border-left: 1px solid #4a5a60;
  box-sizing: border-box;
`;

const galleryIcons = ['line', 'rect', 'pent', 'pentR', 'circ', 'arc3', 'arc2', 'arcB', 'arcB2', 'spline', 'wave', 'ellipse', 'partial', 'pick', 'dot'];
const modifyIcons = ['mirror', 'mirrorPen', 'splitB', 'splitC', 'unpinX', 'offset', 'rotate', 'arrayG', 'scale', 'pin', 'copyM', 'trim', 'trimOne', 'trimMany', 'del'];
const viewBarIcons = ['vbDetail', 'vbStyle', 'vbSun', 'vbShadow', 'vbCrop', 'vbHide', 'vbLock', 'vbTemp'];

const hatch = [
  [779, 268, 693, 440], [827, 277, 739, 448], [876, 287, 783, 455], [923, 295, 827, 462],
  [971, 302, 874, 470], [1020, 310, 918, 475], [1068, 320, 962, 482], [1116, 328, 1006, 488],
  [1164, 335, 1051, 497], [1212, 343, 1096, 505], [1258, 360, 1141, 510],
];

const edges = [
  'M731 259L1258 350', 'M731 259V422', 'M731 422L1258 515', 'M731 422L648 597',
  'M648 435L1185 518', 'M1185 518L1258 427', 'M1185 518L1258 607', 'M648 597L850 633',
  'M646 597L845 633',
];

function Drawing() {
  return (
    <Scene width="1032" height="435" viewBox="226 198 1032 435">
      <path d="M284 220L468 252L409 380L227 348M284 220L227 346" fill="none" stroke="#111" strokeWidth=".8" />
      <path d="M228 558L237 555L228 575" fill="none" stroke="#222" strokeWidth=".8" />
      <g fill="none" stroke="#b4b4b4" strokeWidth=".7" strokeDasharray="16 3 3 3">
        <path d="M570 200L366 633" />
        <path d="M590 216L396 633" />
        <path d="M590 216L1258 344" />
        <path d="M810 200L1258 278" />
      </g>
      <path d="M731 259L1258 350V427L1185 518L648 435z" fill="#dcdee4" />
      <path d="M648 435L1185 518L1258 427V633H870L648 597C625 590 612 570 612 545C612 525 630 480 648 435z" fill="#c7cad3" />
      <g stroke="#37b8d8" strokeWidth=".9">
        {hatch.map(([x1, y1, x2, y2]) => (
          <line key={x1} x1={x1} y1={y1} x2={x2} y2={y2} />
        ))}
      </g>
      <g fill="#b4b7c2" fillOpacity=".35">
        <path d="M922 323L1080 348V520L922 492z" />
        <path d="M876 403L922 323V492L876 590z" />
        <path d="M1035 415L1080 348V520L1035 617z" />
      </g>
      <path d="M922 323L1080 348L1035 415L876 403z" fill="#c6c8d1" />
      <g fill="none" stroke="#23439a" strokeWidth="1.3">
        {edges.map((d) => <path key={d} d={d} />)}
        <path d="M731 259L648 435C630 480 612 525 612 545C612 570 625 590 648 597" />
        <path d="M922 323L1080 348L1035 415L876 403z" />
        <path d="M876 403V590L1035 617L1080 520L922 492L876 590" />
        <path d="M922 323V492M1035 415V617M1080 348V520" />
      </g>
      <path d="M724 384V401L728 397L731 404L734 403L731 396H737z" fill="#fff" stroke="#333" strokeWidth=".8" />
    </Scene>
  );
}

function ViewCube() {
  return (
    <CubeOverlay width="84" height="76" viewBox="0 0 84 76">
      <ellipse cx="43" cy="44" rx="38" ry="25" fill="#f4f4f4" stroke="#ddd" />
      <ellipse cx="43" cy="43" rx="30" ry="18" fill="#fff" stroke="#e4e4e4" />
      <path d="M35 5L62 10L55 29L25 22z" fill="#ececec" stroke="#bbb" strokeWidth=".6" />
      <path d="M25 22L55 29L53 50L25 42z" fill="#e4e4e4" stroke="#bbb" strokeWidth=".6" />
      <path d="M55 29L62 10L60 30L53 50z" fill="#d4d4d4" stroke="#bbb" strokeWidth=".6" />
      <text x="43" y="17" fontSize="5" fill="#aaa" textAnchor="middle" fontFamily="Liberation Sans" transform="rotate(8 43 17)">TOP</text>
      <text x="39" y="38" fontSize="6" fill="#999" textAnchor="middle" fontFamily="Liberation Sans" transform="rotate(8 39 38)">FRONT</text>
      <circle cx="12" cy="34" r="4" fill="none" stroke="#ccc" strokeWidth="1.5" strokeDasharray="1.5 1" />
      <circle cx="78" cy="46" r="4" fill="none" stroke="#ccc" strokeWidth="1.5" strokeDasharray="1.5 1" />
      <circle cx="32" cy="66" r="4" fill="none" stroke="#ccc" strokeWidth="1.5" strokeDasharray="1.5 1" />
    </CubeOverlay>
  );
}

function NavBar() {
  return (
    <NavOverlay width="33" height="112" viewBox="0 0 33 112">
      <rect x=".5" y=".5" width="32" height="110" rx="3" fill="#f8f8f8" fillOpacity=".55" stroke="#aaa" />
      <circle cx="26" cy="6" r="3" fill="#bbb" />
      <rect x="5" y="21" width="21" height="21" rx="7" fill="#f4f4f4" fillOpacity=".7" stroke="#999" />
      <circle cx="14" cy="29" r="5" fill="none" stroke="#999" strokeWidth="1.3" />
      <rect x="18" y="30" width="10" height="10" fill="#8fb9e0" stroke="#5d93c6" strokeWidth=".7" />
      <path d="M14 48h6l-3 3z" fill="#777" />
      <path d="M2 55h29" stroke="#aaa" />
      <rect x="8" y="64" width="10" height="11" fill="#a6c78e" stroke="#88a772" strokeWidth=".6" />
      <circle cx="20" cy="77" r="3" fill="none" stroke="#777" />
      <path d="M22 79l3 3" stroke="#777" />
      <path d="M14 90h6l-3 3z" fill="#777" />
      <rect x="22" y="101" width="7" height="7" rx="3" fill="none" stroke="#999" />
    </NavOverlay>
  );
}

function Tree() {
  const leaf = (label, on) => (
    <Row key={label} $x={49}>
      <Dash $w={14} />
      <RowLabel $on={on}>{label}</RowLabel>
    </Row>
  );
  const group = (label, open) => (
    <Row $x={24}>
      <Toggle>{open ? '−' : '+'}</Toggle>
      <Dash $w={4} />
      <RowLabel>{label}</RowLabel>
    </Row>
  );
  const root = (label, icon, open) => (
    <Row $x={5}>
      {open === undefined ? <Dash $w={15} /> : <><Toggle>{open ? '−' : '+'}</Toggle><Dash $w={2} $mr={0} /></>}
      <RowIcon><Icon name={icon} size={15} /></RowIcon>
      <RowLabel>{label}</RowLabel>
    </Row>
  );
  return (
    <TreeBox>
      {root('Views (all)', 'viewsAll', true)}
      <Branch $x={29}>
        {group('Floor Plans', true)}
        <Branch $x={49}>
          {leaf('Level 1')}
          {leaf('Level 2')}
          {leaf('Site')}
        </Branch>
        {group('Ceiling Plans', true)}
        <Branch $x={49}>
          {leaf('Level 1')}
          {leaf('Level 2')}
        </Branch>
        {group('3D Views', false)}
        {group('Elevations (Building Elevation)', true)}
        <Branch $x={49}>
          {leaf('East')}
          {leaf('North', true)}
          {leaf('South')}
          {leaf('West')}
        </Branch>
      </Branch>
      {root('Legends', 'legends')}
      {root('Schedules/Quantities (all)', 'schedules')}
      {root('Sheets (all)', 'sheets')}
      {root('Families', 'families', false)}
      {root('Groups', 'groups', false)}
      {root('Revit Links', 'links')}
    </TreeBox>
  );
}

export default function App() {
  return (
    <Page>
      <GlobalStyle />
      <TitleBar>
        <QatItem $w={20} $ml={6}><Logo>R</Logo></QatItem>
        <QatItem $ml={4}><Icon name="props" /></QatItem>
        <QatItem $ml={8}><Icon name="open" size={18} /></QatItem>
        <QatItem $ml={5}><Icon name="save" /></QatItem>
        <QatItem $ml={4}><Icon name="sync" /></QatItem>
        <QatItem $w={8} $ml={1}><Caret /></QatItem>
        <QatItem $ml={7}><Icon name="undo" /></QatItem>
        <QatItem $w={8} $ml={3}><Caret /></QatItem>
        <QatItem $ml={4}><Icon name="redo" /></QatItem>
        <QatItem $w={8} $ml={4}><Caret /></QatItem>
        <QatItem $ml={5}><Icon name="print" /></QatItem>
        <QatItem $ml={8}><Icon name="measure" /></QatItem>
        <QatItem $w={8} $ml={3}><Caret /></QatItem>
        <QatItem $ml={7}><Icon name="dim" /></QatItem>
        <QatItem $ml={5}><Icon name="tag" /></QatItem>
        <QatItem $ml={4}><LetterA>A</LetterA></QatItem>
        <QatItem $ml={10}><Icon name="house" /></QatItem>
        <QatItem $w={8} $ml={3}><Caret /></QatItem>
        <QatItem $ml={4}><Icon name="diamond" /></QatItem>
        <QatItem $w={24} $ml={3} $active><Icon name="thin" /></QatItem>
        <QatItem $ml={10}><Icon name="hidden" /></QatItem>
        <QatItem $w={12} $ml={5}><FastForward>▶▶</FastForward></QatItem>
        <WindowTitle>Project1 - 3D View: {'{3D}'}</WindowTitle>
        <ExpandArrow />
        <SearchBox>Type a keyword or phrase</SearchBox>
        <QatItem $ml={2}><Icon name="binoc" /></QatItem>
        <QatItem $ml={4}><Icon name="sat" /></QatItem>
        <QatItem $ml={3}><Icon name="star" size={17} /></QatItem>
        <QatItem $ml={4}><Icon name="user" size={18} /></QatItem>
        <UserName>mer17019</UserName>
        <Caret />
        <QatItem $ml={9}><Icon name="cart" size={18} /></QatItem>
        <HelpWrap $ml={15}><Icon name="help" size={18} /><HelpMark>?</HelpMark></HelpWrap>
        <Caret $ml={2} />
        <WindowButtons>
          <WinButton><MinBar /></WinButton>
          <WinButton><MaxBox /></WinButton>
          <WinButton><Icon name="closeX" size={14} /></WinButton>
        </WindowButtons>
      </TitleBar>

      <TabRow>
        <FileTab>File</FileTab>
        <RibbonTab>Create</RibbonTab>
        <RibbonTab>Insert</RibbonTab>
        <RibbonTab>View</RibbonTab>
        <RibbonTab>Manage</RibbonTab>
        <RibbonTab>Add-Ins</RibbonTab>
        <RibbonTab $active>Modify</RibbonTab>
        <MinimizeToggle>
          <TogglePill><UpCaret /></TogglePill>
          <Caret />
        </MinimizeToggle>
      </TabRow>

      <Ribbon>
        <Panel $w={62}>
          <PanelBody>
            <ModifyButton><Icon name="cursor" size={20} />Modify</ModifyButton>
          </PanelBody>
          <PanelLabel>Select <Caret /></PanelLabel>
        </Panel>
        <Panel $w={82}>
          <PanelBody>
            <PropsGrid>
              <Icon name="typeProps" size={28} />
              <Icon name="folder" size={32} />
              <PropsActive><Icon name="propsBig" size={30} /></PropsActive>
              <Icon name="gridBlue" size={32} />
            </PropsGrid>
          </PanelBody>
          <PanelLabel>Properties</PanelLabel>
        </Panel>
        <Panel $w={252}>
          <PanelBody>
            <CommandStack $w={84}>
              <Command><Icon name="model" />Model</Command>
              <Command><Icon name="refPlane" />Reference</Command>
              <Command $off><Icon name="plane" />Plane</Command>
            </CommandStack>
            <Gallery>
              <GalleryGrid>
                {galleryIcons.map((n) => <Icon key={n} name={n} size={17} />)}
              </GalleryGrid>
              <GalleryScroll>
                <ScrollCell><UpCaret /></ScrollCell>
                <ScrollCell><Caret /></ScrollCell>
                <ScrollCell><Caret /></ScrollCell>
              </GalleryScroll>
            </Gallery>
            <CommandStack $w={43} $left={0} $top={7} $center>
              <Icon name="faded1" size={32} />
              <Icon name="faded2" size={30} />
            </CommandStack>
          </PanelBody>
          <PanelLabel>Draw</PanelLabel>
        </Panel>
        <Panel $w={110}>
          <PanelBody>
            <BigButton $w={42}>
              <Icon name="setGrid" size={30} />
              <BigText $mt={6}>Set</BigText>
            </BigButton>
            <CommandStack $w={64} $left={3} $top={17}>
              <Command $gap={4}><Icon name="show" size={17} />Show</Command>
              <Command $gap={4}><Icon name="viewer" size={17} />Viewer</Command>
            </CommandStack>
          </PanelBody>
          <PanelLabel>Work Plane</PanelLabel>
        </Panel>
        <Panel $w={79}>
          <PanelBody>
            <BigButton $w={52} $off $top={6}>
              <Icon name="paste" size={32} />
              <BigText $mt={6}>Paste</BigText>
              <Caret $c="#999" />
            </BigButton>
            <CommandStack $w={24} $left={0} $center>
              <Command><Icon name="scissors" size={17} /></Command>
              <Command><Icon name="copy" size={17} /></Command>
              <Command><Icon name="brush" size={18} /></Command>
            </CommandStack>
          </PanelBody>
          <PanelLabel>Clipboard</PanelLabel>
        </Panel>
        <Panel $w={108}>
          <PanelBody>
            <GeoColumn $w={72} $left={8}>
              <Command><Icon name="cut" />Cut<Caret $ml={3} /></Command>
              <Command><Icon name="join" />Join<Caret $ml={3} /></Command>
            </GeoColumn>
            <GeoColumn $w={36} $left={0}>
              <Command><Icon name="cutWall" size={18} /></Command>
              <Command $gap={8}><Icon name="wallJoin" size={18} /><Caret /></Command>
            </GeoColumn>
          </PanelBody>
          <PanelLabel>Geometry</PanelLabel>
        </Panel>
        <Panel $w={173}>
          <PanelBody>
            <CommandStack $w={45} $left={6} $top={5} $gap={5}>
              <Icon name="alignBig" size={33} box={33} />
              <Icon name="move" size={28} />
            </CommandStack>
            <Matrix>
              {modifyIcons.map((n) => <Icon key={n} name={n} size={17} />)}
            </Matrix>
          </PanelBody>
          <PanelLabel>Modify</PanelLabel>
        </Panel>
        <Panel $w={57}>
          <PanelBody>
            <CommandStack $w={57} $left={4} $top={12} $gap={13}>
              <Command $gap={9}><Icon name="measureBig" size={30} box={32} /><Caret /></Command>
              <Command $gap={9}><Icon name="dimBig" size={30} box={30} /><Caret /></Command>
            </CommandStack>
          </PanelBody>
          <PanelLabel>Measure</PanelLabel>
        </Panel>
        <Panel $w={83} $plain>
          <PanelBody>
            <BigButton $w={44} $top={11}>
              <Icon name="check" size={26} />
              <BigText $mt={6}>Finish<br />Mass</BigText>
            </BigButton>
            <BigButton $w={36} $top={11}>
              <Icon name="cancel" size={26} />
              <BigText $mt={6}>Cancel<br />Mass</BigText>
            </BigButton>
          </PanelBody>
          <PanelLabel $bg="#c8cae3">In-Place Editor</PanelLabel>
        </Panel>
      </Ribbon>

      <OptionsBar />

      <Workspace>
        <Browser>
          <BrowserHead>
            <span>Project Browser - Project1</span>
            <Icon name="closeX" size={11} />
          </BrowserHead>
          <Tree />
          <BrowserTabs>
            <BrowserTab $on>Project Browser - Project1</BrowserTab>
            <BrowserTab>Properties</BrowserTab>
          </BrowserTabs>
        </Browser>
        <ViewArea>
          <ViewTabs>
            <ViewTab $w={127} $pl={6}><Icon name="sheetTab" size={15} />Level 1</ViewTab>
            <ViewTab $w={128} $on $pl={4} $gap={10}>
              <Icon name="house3d" size={15} />{'{3D}'}
              <TabClose><Icon name="closeX" size={11} /></TabClose>
            </ViewTab>
            <ViewTab $w={100} $pl={6} $gap={7}><Icon name="north" size={15} />North</ViewTab>
            <TabsMenu><Caret /></TabsMenu>
          </ViewTabs>
          <CanvasRow>
            <Viewport>
              <Drawing />
              <ViewCube />
              <NavBar />
            </Viewport>
            <VScroll>
              <Chevron $r={45} $m="3px 0 0" />
              <VThumb />
              <Chevron $r={225} $m="0 0 5px" />
            </VScroll>
          </CanvasRow>
          <ViewBar>
            <ScaleText>1/8" = 1'-0"</ScaleText>
            <ViewBarIcons>
              {viewBarIcons.map((n) => <Icon key={n} name={n} size={16} />)}
            </ViewBarIcons>
            <Chevron $r={-45} $m="0 0 0 12px" />
            <HThumb />
            <Chevron $r={135} $m="0 0 0 368px" />
            <Grip />
          </ViewBar>
        </ViewArea>
      </Workspace>

      <StatusBar>
        Form : Joined Solid Geometry
        <StatusIcons>
          <Icon name="stLink" size={18} />
          <Icon name="stUnder" size={18} />
          <Icon name="stPin" size={18} />
          <Icon name="stFace" size={18} />
          <Icon name="stDrag" size={18} />
          <Icon name="stCog" size={18} />
          <FilterCount>
            <Icon name="stFilter" size={16} />
            <span>:0</span>
          </FilterCount>
        </StatusIcons>
      </StatusBar>

      <Taskbar>
        <StartButton><Icon name="win" size={17} /></StartButton>
        <SearchField><Icon name="lens" size={18} />Type here to search</SearchField>
        <TaskButton $w={48}><Icon name="cortana" size={18} /></TaskButton>
        <TaskButton $w={50}><Icon name="taskview" size={18} /></TaskButton>
        <TaskButton $open><Icon name="explorer" size={25} /></TaskButton>
        <TaskButton $open><Icon name="chrome" size={26} /></TaskButton>
        <TaskButton><Icon name="chrome" size={26} /></TaskButton>
        <TaskButton><Icon name="marker" size={25} /></TaskButton>
        <TaskButton $open><Icon name="excel" size={26} /></TaskButton>
        <TaskButton $open><Icon name="rufus" size={26} /></TaskButton>
        <TaskButton $open $active><RevitTile>R</RevitTile></TaskButton>
        <TaskButton $open><Icon name="obs" size={26} /></TaskButton>
        <Tray>
          <TrayItem><Icon name="up" size={16} /></TrayItem>
          <TrayItem><Icon name="action" size={17} /></TrayItem>
          <TrayItem><Icon name="cloud" size={19} /></TrayItem>
          <TrayItem><Icon name="wifi" size={17} /></TrayItem>
          <TrayItem><Icon name="speaker" size={17} /></TrayItem>
          <TrayItem><Icon name="dropbox" size={18} /></TrayItem>
          <Clock><span>23:02</span><span>3/4/2020</span></Clock>
          <NotifyButton><Icon name="notify" size={18} /></NotifyButton>
          <ShowDesktop />
        </Tray>
      </Taskbar>
    </Page>
  );
}
